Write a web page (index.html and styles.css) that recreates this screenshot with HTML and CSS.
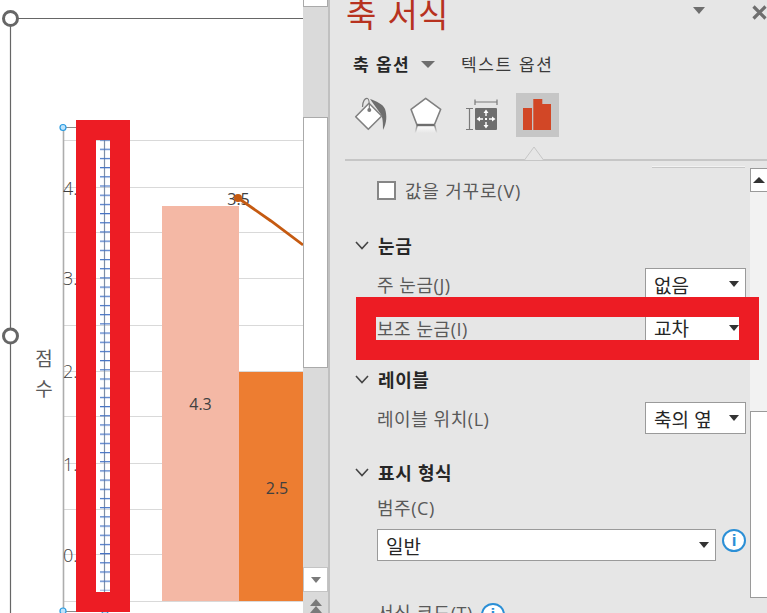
FILE: index.html
```html
<!DOCTYPE html>
<html lang="ko">
<head>
<meta charset="utf-8">
<title>축 서식</title>
<link rel="stylesheet" href="styles.css">
</head>
<body>
<div class="app">
  <section class="canvas">
    <svg class="chart" width="303" height="613" viewBox="0 0 303 613">
      <defs>
        <pattern id="ticks" x="100" y="139.5" width="10" height="9.19" patternUnits="userSpaceOnUse">
          <rect class="tick" x="0" y="0" width="10" height="1.2"></rect>
        </pattern>
      </defs>
      <path class="frame" d="M303 18.5H10.5V613"></path>
      <g class="grid">
        <path d="M63 140.5H303M63 187.5H303M63 232.5H303M63 278.5H303M63 325.5H303M63 371.5H303M63 416.5H303M63 463.5H303M63 509.5H303M63 554.5H303M63 601.5H303"></path>
      </g>
      <rect class="bar-light" x="162" y="206" width="77" height="395"></rect>
      <rect class="bar-orange" x="239" y="372" width="64" height="229"></rect>
      <path class="axis" d="M63.5 127V611"></path>
      <path class="axis-thin" d="M63 127.5H76M63 611.5H110"></path>
      <path class="minor-axis" d="M104.5 140V592"></path>
      <rect x="100" y="139.5" width="10" height="451" fill="url(#ticks)"></rect>
      <text class="axis-label" x="63" y="194.5">4.</text>
      <text class="axis-label" x="63" y="285">3.</text>
      <text class="axis-label" x="63" y="378">2.</text>
      <text class="axis-label" x="63" y="471">1.</text>
      <text class="axis-label" x="63" y="562">0.</text>
      <text class="axis-title" x="44" y="366">점</text>
      <text class="axis-title" x="44" y="396">수</text>
      <text class="value" x="200.5" y="410">4.3</text>
      <text class="value" x="277" y="494">2.5</text>
      <text class="value" x="238.5" y="205">3.5</text>
      <path class="series" d="M238 198L271 221L303 245"></path>
      <circle class="series-dot" cx="238" cy="198" r="4"></circle>
      <circle class="handle" cx="10.5" cy="18.5" r="7"></circle>
      <circle class="handle" cx="10.5" cy="336" r="7"></circle>
      <circle class="handle-blue" cx="63" cy="127.5" r="3"></circle>
      <circle class="handle-blue" cx="63" cy="611" r="3"></circle>
      <circle class="handle-blue" cx="105" cy="611" r="3"></circle>
    </svg>
    <div class="mark mark-axis"></div>
  </section>

  <div class="sheet-scroll">
    <div class="thumb thumb-top"></div>
    <div class="thumb thumb-main"></div>
    <div class="scroll-btn"><span class="tri tri-gray"></span></div>
    <div class="double-up"><span class="tri-up"></span><span class="tri-up"></span></div>
  </div>

  <aside class="panel">
    <header class="panel-head">
      <div class="title-row">
        <h1 class="title">축 서식</h1>
        <span class="tri tri-menu"></span>
        <svg class="close" width="15" height="15" viewBox="0 0 15 15"><path d="M1.5 1.5L13.5 13.5M13.5 1.5L1.5 13.5"></path></svg>
      </div>
      <div class="tabs">
        <span class="tab tab-active">축 옵션</span>
        <span class="tri tri-tab"></span>
        <span class="tab">텍스트 옵션</span>
      </div>
      <div class="icons">
        <span class="icon-box">
          <svg width="44" height="44" viewBox="0 0 44 44">
            <path class="drip" d="M19 6C25 8 32 11 34 16C36 22 36 30 32 37C32 30 32 24 29 20Z"></path>
            <path class="ic-shape" d="M4.7 23.7L18 10.3L30.7 23L17.3 36.3Z"></path>
            <path class="ic-line" d="M11.5 14C11.5 8 14 5 16.5 5.5C18.5 6 18.5 12 18.3 17"></path>
            <circle class="ic-dot" cx="18.3" cy="17" r="2"></circle>
          </svg>
        </span>
        <span class="icon-box">
          <svg width="44" height="44" viewBox="0 0 44 44">
            <defs>
              <linearGradient id="fade" x1="0" y1="0" x2="0" y2="1"><stop offset="0" stop-color="#fff"></stop><stop offset="1" stop-color="#e6e6e6"></stop></linearGradient>
              <linearGradient id="fade-line" x1="0" y1="0" x2="0" y2="1"><stop offset="0" stop-color="#808080"></stop><stop offset="1" stop-color="#e6e6e6"></stop></linearGradient>
            </defs>
            <path fill="url(#fade)" d="M11 32H28.3L30.5 40H9Z"></path>
            <path fill="url(#fade-line)" d="M10.5 32H12L10 40H8.5ZM27.8 32H29.3L31.5 40H30Z"></path>
            <path class="ic-shape" d="M19.7 5.3L34.7 16.3L28.3 32H11L5 16.3Z"></path>
            <path class="ic-heavy" d="M11 32H28.3"></path>
          </svg>
        </span>
        <span class="icon-box">
          <svg width="44" height="44" viewBox="0 0 44 44">
            <path class="ic-line" d="M14 6.5V12M14 9H36M36 6.5V12M5 15.5H12M8.5 15.5V36.5M5 36.5H12"></path>
            <rect class="ic-dark" x="14" y="15" width="22" height="22" rx="1"></rect>
            <path class="ic-arrow" d="M25 18V23M25 29V34M17 26H22M28 26H33"></path>
            <path class="ic-head" d="M25 16.5L27.5 20H22.5ZM25 35.5L22.5 32H27.5ZM15.5 26L19 23.5V28.5ZM34.5 26L31 28.5V23.5Z"></path>
            <rect class="ic-head" x="24" y="25" width="2" height="2"></rect>
          </svg>
        </span>
        <span class="icon-box icon-active">
          <svg width="44" height="44" viewBox="0 0 44 44">
            <path class="ic-bars" d="M7 15H16V37H7ZM17.3 6H26.3V11H35V37H17.3Z"></path>
          </svg>
        </span>
      </div>
      <div class="rule"></div>
      <svg class="notch" width="20" height="15" viewBox="0 0 20 15"><path d="M0.5 14L10 1L19.5 14"></path></svg>
    </header>

    <div class="panel-main">
      <div class="form">
        <div class="clip-edge"></div>
        <label class="check-row"><span class="check"></span><span class="label">값을 거꾸로(V)</span></label>

        <div class="heading heading-first"><svg class="chev" width="14" height="9" viewBox="0 0 14 9"><path d="M1 1L7 7.5L13 1"></path></svg><span>눈금</span></div>
        <div class="field field-first"><span class="label">주 눈금(J)</span><div class="select select-s"><span>없음</span><span class="tri tri-dark"></span></div></div>
        <div class="field field-second"><span class="label">보조 눈금(I)</span><div class="select select-s"><span class="select-raised">교차</span><span class="tri tri-dark"></span></div></div>

        <div class="heading heading-label"><svg class="chev" width="14" height="9" viewBox="0 0 14 9"><path d="M1 1L7 7.5L13 1"></path></svg><span>레이블</span></div>
        <div class="field field-first"><span class="label">레이블 위치(L)</span><div class="select select-s"><span>축의 옆</span><span class="tri tri-dark"></span></div></div>

        <div class="heading heading-format"><svg class="chev" width="14" height="9" viewBox="0 0 14 9"><path d="M1 1L7 7.5L13 1"></path></svg><span>표시 형식</span></div>
        <div class="label label-block">범주(C)</div>
        <div class="select-row"><div class="select select-l"><span>일반</span><span class="tri tri-dark"></span></div><span class="info">i</span></div>
        <div class="code-row"><span class="label">서식 코드(T)</span><span class="info info-small">i</span></div>
      </div>
      <div class="pane-scroll">
        <div class="pane-up"><span class="tri-up tri-up-dark"></span></div>
        <div class="pane-thumb"></div>
      </div>
    </div>
    <div class="mark mark-field"></div>
  </aside>
</div>
</body>
</html>
```
FILE: styles.css
```css
* { box-sizing: border-box; }
html, body { margin: 0; padding: 0; }
body {
  width: 767px;
  height: 613px;
  overflow: hidden;
  background: #fff;
  font-family: "Noto Sans CJK KR", "Open Sans", sans-serif;
}
.app { display: flex; width: 767px; height: 613px; overflow: hidden; }

/* chart canvas */
.canvas { position: relative; width: 303px; height: 613px; flex: none; background: #fff; }
.chart { display: block; }
.frame { fill: none; stroke: #666; stroke-width: 1.2; }
.grid path { fill: none; stroke: #d9d9d9; stroke-width: 1; }
.bar-light { fill: #f4b8a5; }
.bar-orange { fill: #ed7d31; }
.axis { fill: none; stroke: #adadad; stroke-width: 1.6; }
.axis-thin { fill: none; stroke: #8c8c8c; stroke-width: 1; }
.minor-axis { fill: none; stroke: #7f8fa6; stroke-width: 1.2; }
.tick { fill: #4472c4; }
.axis-label { font-family: "Open Sans", sans-serif; font-weight: 300; font-size: 18px; fill: #404040; }
.axis-title { font-family: "Noto Sans CJK KR", sans-serif; font-size: 19px; fill: #595959; text-anchor: middle; }
.value { font-family: "Open Sans", sans-serif; font-size: 16px; fill: #404040; text-anchor: middle; }
.series { fill: none; stroke: #c55a11; stroke-width: 2.8; }
.series-dot { fill: #c55a11; }
.handle { fill: #fff; stroke: #666; stroke-width: 3; }
.handle-blue { fill: #bfe3fb; stroke: #2a9be0; stroke-width: 1.2; }

/* red annotation frames */
.mark { position: absolute; border: 20px solid #ed1c24; }
.mark-axis { left: 76px; top: 120px; width: 54px; height: 492px; }
.mark-field { left: 26px; top: 297px; width: 403px; height: 63px; }

/* scrollbar beside the sheet */
.sheet-scroll {
  flex: none;
  width: 27px;
  height: 613px;
  display: flex;
  flex-direction: column;
  background: #dadada;
  border-right: 2px solid #c0c0c0;
}
.thumb { background: #fff; border: 1px solid #aaa; }
.thumb-top { height: 7px; border-top: 0; }
.thumb-main { height: 253px; margin-top: 110px; }
.scroll-btn {
  height: 25px;
  margin-top: 199px;
  background: #fff;
  border: 1px solid #c4c4c4;
  display: flex;
  align-items: center;
  justify-content: center;
}
.double-up { margin-top: 7px; display: flex; flex-direction: column; align-items: center; gap: 0; }

/* triangles */
.tri { display: block; width: 0; height: 0; border-style: solid; border-color: #333 transparent transparent; }
.tri-gray { border-width: 6px 5.5px 0; border-top-color: #7a7a7a; }
.tri-menu { border-width: 7px 6px 0; border-top-color: #6e6e6e; margin-left: 245px; margin-top: 7px; }
.tri-tab { border-width: 7px 7px 0; border-top-color: #6e6e6e; margin: 0 26px 0 11px; }
.tri-dark { border-width: 6px 5.5px 0; border-top-color: #333; }
.tri-up { display: block; width: 0; height: 0; border-style: solid; border-width: 0 6px 7px; border-color: transparent transparent #7a7a7a; }
.tri-up-dark { border-bottom-color: #333; border-width: 0 6px 6px; }

/* panel */
.panel { position: relative; flex: none; width: 437px; height: 613px; background: #e6e6e6; display: flex; flex-direction: column; overflow: hidden; }
.panel-head { position: relative; height: 161px; flex: none; }
.title-row { height: 26px; display: flex; align-items: flex-start; padding-left: 16px; }
.title {
  margin: -9px 0 0;
  width: 102px;
  white-space: nowrap;
  font-size: 33px;
  line-height: 44px;
  font-weight: 400;
  word-spacing: 2px;
  color: #b7321f;
}
.close { margin: 5px 0 0 47px; flex: none; }
.close path { fill: none; stroke: #6e6e6e; stroke-width: 3.2; }
.tabs { display: flex; align-items: center; margin-top: 26px; height: 24px; padding-left: 23px; }
.tab { font-size: 17px; letter-spacing: 1.6px; color: #3a3a3a; white-space: nowrap; line-height: 24px; }
.tab-active { font-weight: 700; color: #262626; width: 57px; letter-spacing: 1.3px; }
.icons { display: flex; gap: 11px; margin-top: 17px; padding-left: 21px; height: 44px; }
.icon-box { display: block; width: 44px; height: 44px; flex: none; }
.icon-box svg { display: block; }
.icon-active { width: 43px; background: #c6c6c6; }
.ic-shape { fill: #fff; stroke: #808080; stroke-width: 1.6; stroke-linejoin: round; }
.ic-line { fill: none; stroke: #7a7a7a; stroke-width: 1.2; }
.ic-dot { fill: #7a7a7a; }
.drip { fill: #6e6e6e; }
.ic-heavy { stroke: #6e6e6e; stroke-width: 2.4; fill: none; }
.ic-dark { fill: #6e6e6e; }
.ic-arrow { stroke: #fff; stroke-width: 1.4; fill: none; }
.ic-head { fill: #fff; }
.ic-bars { fill: #d24726; }
.rule { margin: 22px 0 0 15px; height: 2px; background: #c6c6c6; }
.notch { position: absolute; left: 194px; top: 146px; }
.notch path { fill: #e6e6e6; stroke: #c6c6c6; stroke-width: 1; }

.panel-main { display: flex; flex: 1; min-height: 0; }
.form { width: 420px; flex: none; padding-left: 47px; }
.clip-edge { height: 2px; margin: 5px 0 0 275px; width: 93px; background: #f2f2f2; border-bottom: 1px solid #c8c8c8; }
.check-row { display: flex; align-items: center; height: 20px; margin-top: 12px; }
.check { width: 19px; height: 19px; background: #fff; border: 2px solid #868686; flex: none; }
.label { font-family: "Open Sans", "Noto Sans CJK KR", sans-serif; font-size: 18px; line-height: 24px; padding-top: 2px; color: #595959; white-space: nowrap; letter-spacing: 0.55px; }
.check-row .label { margin-left: 9px; letter-spacing: 0.8px; }
.heading { display: flex; align-items: center; height: 24px; margin-left: -22px; font-size: 18px; font-weight: 700; color: #262626; letter-spacing: 0.6px; white-space: nowrap; }
.chev { flex: none; margin-right: 9px; }
.chev path { fill: none; stroke: #444; stroke-width: 1.6; }
.heading-first { margin-top: 33px; }
.heading-label { margin-top: 23px; }
.heading-format { margin-top: 26px; }
.field { display: flex; align-items: center; justify-content: space-between; width: 369px; height: 32px; }
.field-first { margin-top: 11px; }
.field-second { margin-top: 12px; }
.select {
  height: 32px;
  background: #fff;
  border: 1px solid #9a9a9a;
  display: flex;
  align-items: center;
  justify-content: space-between;
  font-size: 19px;
  color: #262626;
  white-space: nowrap;
}
.select-raised { margin-top: -2px; }
.select-s { width: 101px; padding: 0 6px 0 8px; }
.select-l { width: 339px; padding: 0 6px 0 8px; }
.label-block { margin-top: 10px; }
.select-row { display: flex; align-items: flex-start; margin-top: 9px; }
.info {
  width: 24px;
  height: 23px;
  margin-left: 6px;
  border: 2px solid #2b8fd6;
  border-radius: 50%;
  color: #2b8fd6;
  background: #fff;
  font-family: "Liberation Sans", sans-serif;
  font-weight: 700;
  font-size: 17px;
  line-height: 19px;
  text-align: center;
  flex: none;
}
.code-row { display: flex; align-items: flex-start; margin-top: 38px; }
.info-small { margin-left: 8px; margin-top: 4px; }

.pane-scroll { width: 17px; flex: none; background: #f2f2f2; margin-top: 7px; height: 430px; display: flex; flex-direction: column; }
.pane-up { height: 24px; background: #fff; border: 1px solid #9a9a9a; border-right: 0; display: flex; align-items: center; justify-content: center; }
.pane-thumb { height: 187px; margin-top: 219px; background: #fff; border: 1px solid #9a9a9a; border-right: 0; }
```
